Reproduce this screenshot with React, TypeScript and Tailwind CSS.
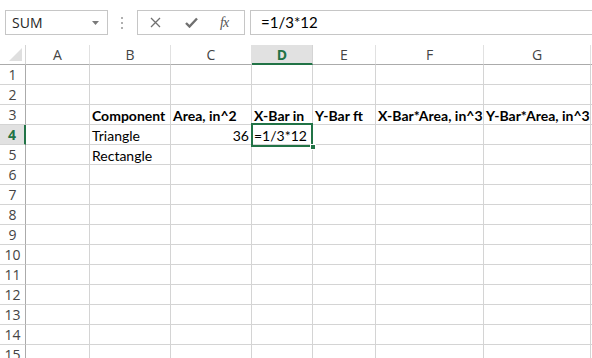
import React from 'react'

const cols = ['A', 'B', 'C', 'D', 'E', 'F', 'G', '']
const selCol = 'D'
const selRow = 4

type Cell = { text: string; bold?: boolean; right?: boolean }

const data: Record<string, Cell> = {
  B3: { text: 'Component', bold: true },
  C3: { text: 'Area, in^2', bold: true },
  D3: { text: 'X-Bar in', bold: true },
  E3: { text: 'Y-Bar ft', bold: true },
  F3: { text: 'X-Bar*Area, in^3', bold: true },
  G3: { text: 'Y-Bar*Area, in^3', bold: true },
  B4: { text: 'Triangle' },
  C4: { text: '36', right: true },
  D4: { text: '=1/3*12' },
  B5: { text: 'Rectangle' },
}

const rows = Array.from({ length: 15 }, (_, i) => i + 1)

const Toolbar = (): JSX.Element => (
  <div className="flex items-center h-[25px] mt-[10px]">
    <div className="ml-[5px] w-[103px] h-[25px] border border-[#c6c6c6] flex items-center justify-between pl-[6px] pr-[8px]">
      <span className="text-[14px] text-[#262626] font-['Open_Sans',sans-serif]">SUM</span>
      <svg width="7" height="4" viewBox="0 0 7 4">
        <path d="M0 0 L7 0 L3.5 4 Z" fill="#7a7a7a" />
      </svg>
    </div>
    <div className="ml-[13px] w-[3px] flex flex-col gap-[3px]">
      <span className="w-[2px] h-[2px] bg-[#b0b0b0]" />
      <span className="w-[2px] h-[2px] bg-[#b0b0b0]" />
      <span className="w-[2px] h-[2px] bg-[#b0b0b0]" />
    </div>
    <div className="ml-[13px] w-[108px] h-[25px] border border-[#c6c6c6] flex items-center">
      <svg className="ml-[12px]" width="11" height="11" viewBox="0 0 11 11">
        <path d="M1 1 L10 10 M10 1 L1 10" stroke="#707070" strokeWidth="1.3" />
      </svg>
      <svg className="ml-[24px]" width="13" height="11" viewBox="0 0 13 11">
        <path d="M1 6 L4.5 9.5 L12 1.5" stroke="#707070" strokeWidth="2.4" fill="none" />
      </svg>
      <span className="ml-[22px] text-[14px] italic text-[#555] font-['Liberation_Serif',serif] tracking-[-1px]">fx</span>
    </div>
    <div className="ml-[5px] flex-1 h-[25px] border border-r-0 border-[#c6c6c6] flex items-center pl-[10px]">
      <span className="text-[15px] text-black font-['Lato',sans-serif]">=1/3*12</span>
    </div>
  </div>
)

const App = (): JSX.Element => {
  return (
    <div className="relative w-[592px] h-[358px] overflow-hidden bg-white">
      <Toolbar />
      <div className="mt-[10px] grid grid-cols-[26px_64px_81px_81px_61px_63px_108px_107px_1fr] font-['Lato',sans-serif] text-[14px] text-black">
        <div className="relative h-5 border-r border-b border-r-[#d4d4d4] border-b-[#ababab]">
          <svg className="absolute right-[3px] bottom-[3px]" width="13" height="13" viewBox="0 0 13 13">
            <path d="M13 0 L13 13 L0 13 Z" fill="#dfdfdf" />
          </svg>
        </div>
        {cols.map((c) =>
          c === selCol ? (
            <div
              key={c}
              className="h-5 border-r border-b-2 border-r-[#d4d4d4] border-b-[#217346] bg-[#e1e1e1] flex items-center justify-center text-[14px] font-bold text-[#217346] font-['Open_Sans',sans-serif]"
            >
              {c}
            </div>
          ) : (
            <div
              key={c || 'x'}
              className="h-5 border-r border-b border-r-[#e1e1e1] border-b-[#ababab] flex items-center justify-center text-[14px] text-[#444] font-['Open_Sans',sans-serif]"
            >
              {c}
            </div>
          ),
        )}
        {rows.map((r) => (
          <React.Fragment key={r}>
            {r === selRow ? (
              <div className="h-5 border-r-2 border-b border-r-[#217346] border-b-[#d4d4d4] bg-[#e1e1e1] flex items-center justify-center text-[14px] font-bold text-[#217346] font-['Open_Sans',sans-serif]">
                {r}
              </div>
            ) : (
              <div className="h-5 border-r border-b border-r-[#ababab] border-b-[#d4d4d4] flex items-center justify-center text-[14px] text-[#444] font-['Open_Sans',sans-serif]">
                {r}
              </div>
            )}
            {cols.map((c) => {
              const cell = data[`${c}${r}`]
              return (
                <div
                  key={c || 'x'}
                  className={`h-5 border-r border-b border-[#d4d4d4] flex items-end px-[2px] whitespace-nowrap leading-[16px] ${
                    cell?.right ? 'justify-end' : ''
                  } ${cell?.bold ? 'font-bold' : ''}`}
                >
                  {cell?.text}
                </div>
              )
            })}
          </React.Fragment>
        ))}
      </div>
      <div className="absolute left-[251px] top-[123px] w-[62px] h-[24px] border-2 border-[#217346]" />
      <div className="absolute left-[310px] top-[144px] w-[6px] h-[6px] bg-[#217346] border border-white" />
    </div>
  )
}

export default App
